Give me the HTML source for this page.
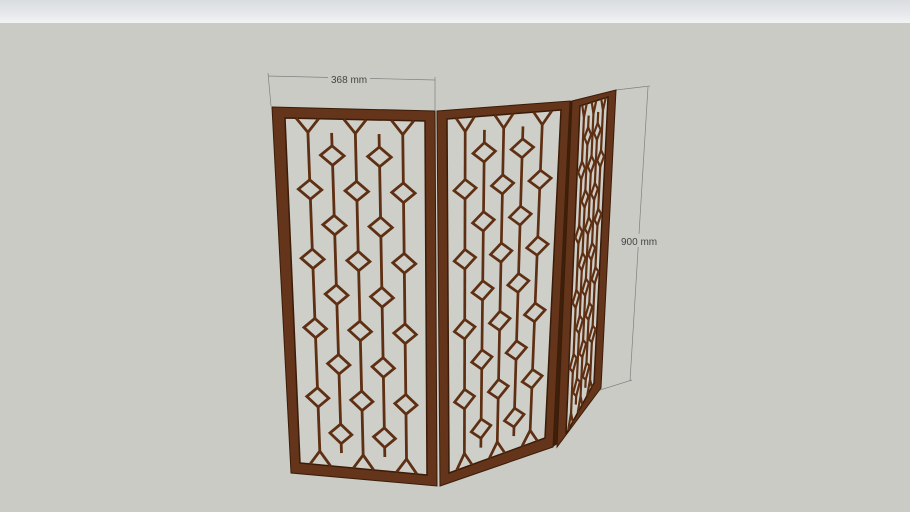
<!DOCTYPE html>
<html><head><meta charset="utf-8"><style>
html,body{margin:0;padding:0;width:910px;height:512px;overflow:hidden;background:#cbcbc6}
#bar{position:absolute;left:0;top:0;width:910px;height:23px;background:linear-gradient(#dadde0,#e6e8eb 60%,#f3f3f5)}
svg{position:absolute;left:0;top:0}
text{font-family:"Liberation Sans",sans-serif;font-size:10px;fill:#444}
</style></head><body>
<div id="bar"></div>
<svg id="s" width="910" height="512" viewBox="0 0 910 512">
<g stroke="#808080" stroke-width="0.7" fill="none">
<line x1="268" y1="76" x2="435" y2="80"/>
<line x1="268" y1="73" x2="271" y2="106"/>
<line x1="435" y1="77" x2="435" y2="110"/>
<line x1="616" y1="90" x2="650" y2="86"/>
<line x1="648" y1="87" x2="630" y2="381"/>
<line x1="600" y1="390" x2="632" y2="380"/>
</g>
<rect x="328" y="72" width="42" height="12" fill="#cbcbc6"/>
<text x="331" y="83">368 mm</text>
<rect x="620" y="234" width="40" height="13" fill="#cbcbc6"/>
<text x="621" y="245">900 mm</text>
<g id="panels"></g>
</svg>
<script>
var NS="http://www.w3.org/2000/svg",G=document.getElementById("panels");
function el(t,a){var e=document.createElementNS(NS,t);for(var k in a)e.setAttribute(k,a[k]);G.appendChild(e);return e;}
function pts(a){return a.map(function(p){return p[0]+","+p[1]}).join(" ");}
var RC="#5e2f12";
function panel(o,i,sw,dw){
 el("polygon",{points:pts(o),fill:"#64351a",stroke:"#3a1c08","stroke-width":1});
 el("polygon",{points:pts(i),fill:"#cfcfca",stroke:"#3a1c08","stroke-width":1.5});
 function m(u,v){var tx=i[0][0]+(i[1][0]-i[0][0])*u,ty=i[0][1]+(i[1][1]-i[0][1])*u,bx=i[3][0]+(i[2][0]-i[3][0])*u,by=i[3][1]+(i[2][1]-i[3][1])*u;return [tx+(bx-tx)*v,ty+(by-ty)*v];}
 var cols=[0.16,0.33,0.5,0.67,0.84],st={stroke:RC,"stroke-width":sw,fill:"none","stroke-linejoin":"miter"};
 cols.forEach(function(u){var a=m(u,0.04),b=m(u,0.96);var l=el("line",{x1:a[0],y1:a[1],x2:b[0],y2:b[1]});for(var k in st)l.setAttribute(k,st[k]);});
 [0.16,0.5,0.84].forEach(function(u){
  var p=[m(u-0.08,0),m(u,0.04),m(u+0.08,0)];var q=el("polyline",{points:pts(p)});for(var k in st)q.setAttribute(k,st[k]);
  var p2=[m(u-0.08,1),m(u,0.96),m(u+0.08,1)];q=el("polyline",{points:pts(p2)});for(var k in st)q.setAttribute(k,st[k]);
 });
 for(var r=0;r<9;r++){var v=0.105+0.1*r;var cs=r%2?[0.16,0.5,0.84]:[0.33,0.67];
  cs.forEach(function(u){var d=[m(u,v-0.028),m(u+dw,v),m(u,v+0.028),m(u-dw,v)];el("polygon",{points:pts(d),fill:"#cfcfca",stroke:RC,"stroke-width":sw});});}
}
panel([[272,107],[435,111],[437,486],[291,473]],[[285,118],[425,121],[427,475],[300,463]],2.8,0.085);
panel([[437,111],[570,101],[553,447],[440,486]],[[447,119],[561,110],[545,438],[449,473]],2.7,0.1);
el("polygon",{points:pts([[553,447],[570,101],[580,99],[563,440]]),fill:"#3e1f0a"});
panel([[572,101],[616,90],[601,388],[557,447]],[[580,106],[608,97],[594,383],[566,434]],2.2,0.12);
</script>
</body></html>
